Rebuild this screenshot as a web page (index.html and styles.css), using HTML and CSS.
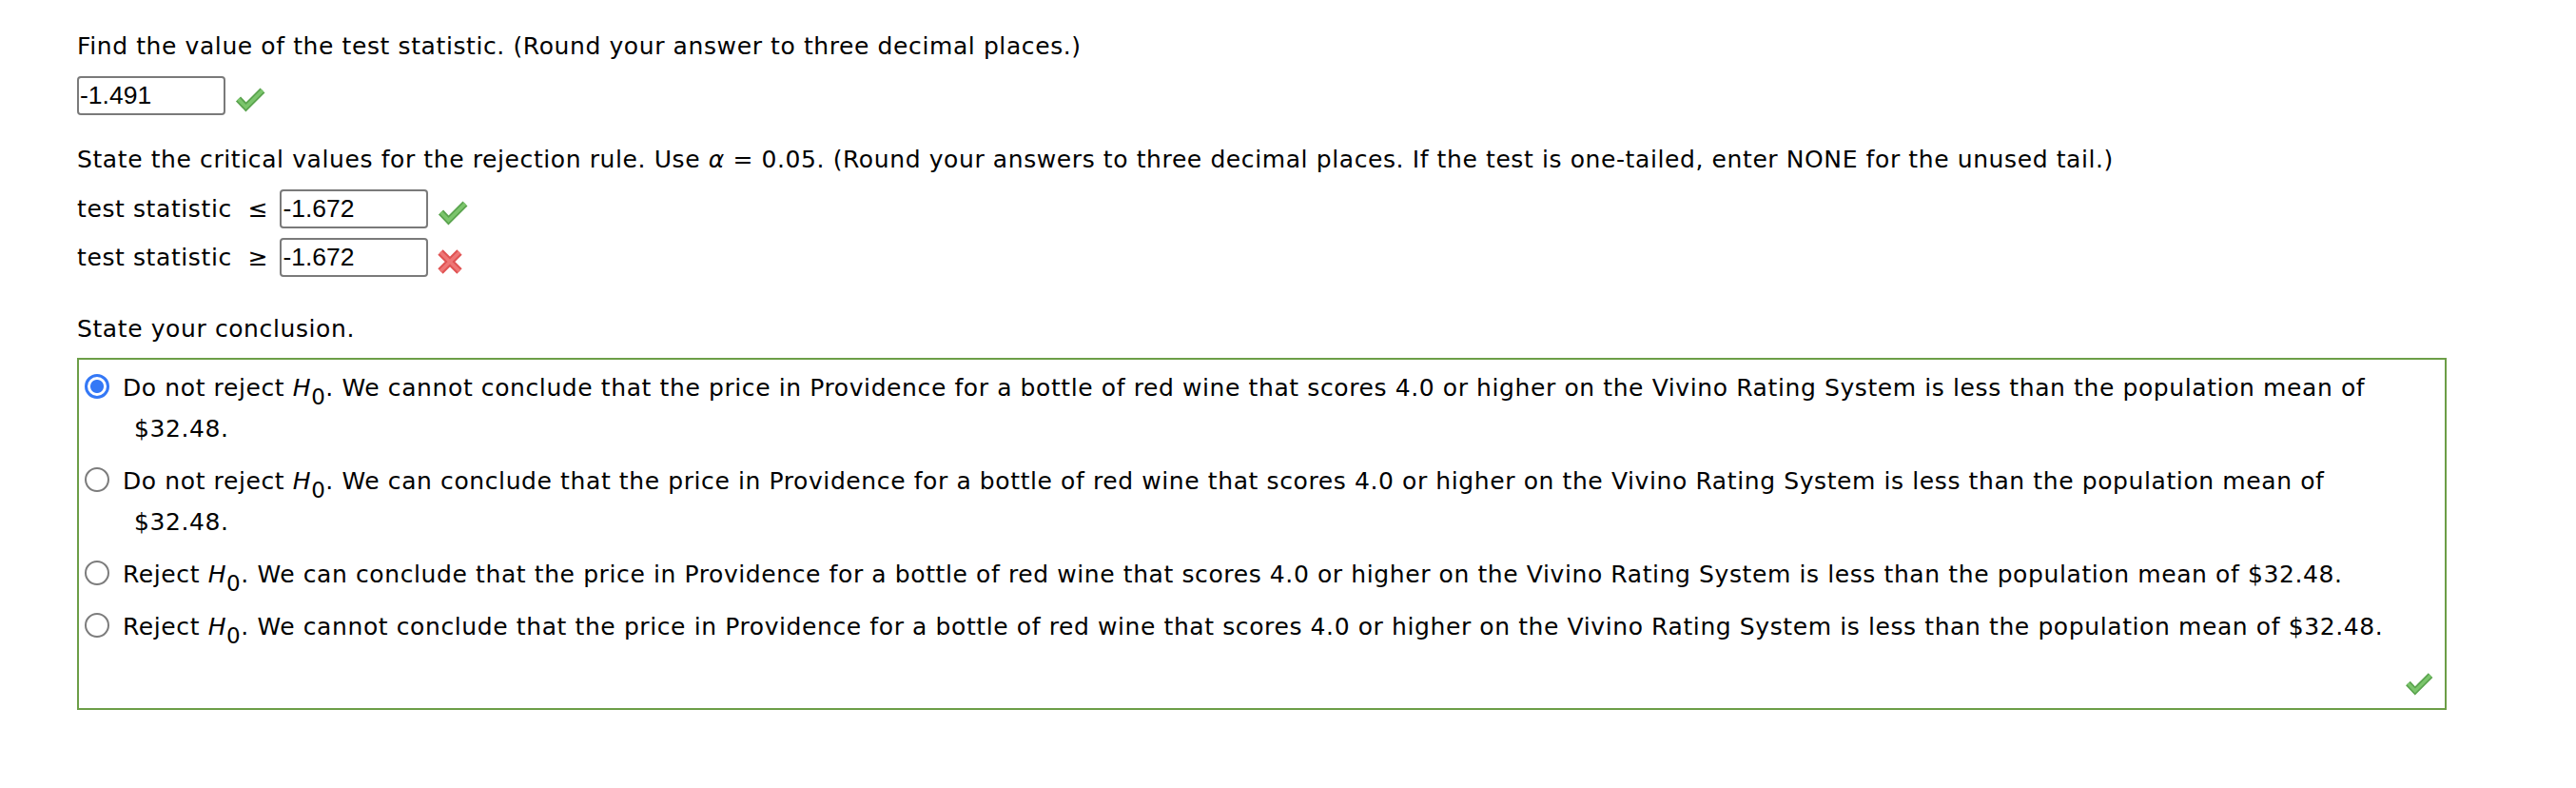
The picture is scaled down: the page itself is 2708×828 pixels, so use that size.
FILE: index.html
```html
<!DOCTYPE html>
<html lang="en">
<head>
    <meta charset="UTF-8">
    <meta name="viewport" content="width=device-width, initial-scale=1.0">
    <title>Hypothesis test</title>
    <link rel="stylesheet" href="styles.css">
</head>
<body>

    <div class="question">

        <div class="part">
            <p class="prompt">Find the value of the test statistic. (Round your answer to three decimal places.)</p>
            <div class="answer-row">
                <input class="answer" type="text" value="-1.491" readonly>
                <svg class="mark" width="32" height="28" viewBox="0 0 32 28">
                    <path class="ok-edge" d="M3.5 14 L11.5 22.5 L29 5"/>
                    <path class="ok-fill" d="M3.5 14 L11.5 22.5 L29 5"/>
                </svg>
            </div>
        </div>

        <div class="part rule">
            <p class="prompt">State the critical values for the rejection rule. Use <i class="math">&alpha;</i> = 0.05. (Round your answers to three decimal places. If the test is one-tailed, enter NONE for the unused tail.)</p>
            <div class="answer-row">
                <span class="lead">test statistic&nbsp; &le;</span>
                <input class="answer" type="text" value="-1.672" readonly>
                <svg class="mark" width="32" height="28" viewBox="0 0 32 28">
                    <path class="ok-edge" d="M3.5 14 L11.5 22.5 L29 5"/>
                    <path class="ok-fill" d="M3.5 14 L11.5 22.5 L29 5"/>
                </svg>
            </div>
            <div class="answer-row">
                <span class="lead">test statistic&nbsp; &ge;</span>
                <input class="answer" type="text" value="-1.672" readonly>
                <svg class="mark wrong" width="30" height="30" viewBox="0 0 30 30">
                    <path class="bad-edge" d="M5 5 L25 25 M25 5 L5 25"/>
                    <path class="bad-fill" d="M5 5 L25 25 M25 5 L5 25"/>
                </svg>
            </div>
        </div>

        <div class="part">
            <p class="prompt">State your conclusion.</p>
            <div class="choices">
                <label class="choice">
                    <input type="radio" name="conclusion" checked>
                    <span class="choice-text">Do not reject <i>H</i><sub>0</sub>. We cannot conclude that the price in Providence for a bottle of red wine that scores 4.0 or higher on the Vivino Rating System is less than the population mean of <span class="amount">$32.48</span>.</span>
                </label>
                <label class="choice">
                    <input type="radio" name="conclusion">
                    <span class="choice-text">Do not reject <i>H</i><sub>0</sub>. We can conclude that the price in Providence for a bottle of red wine that scores 4.0 or higher on the Vivino Rating System is less than the population mean of <span class="amount">$32.48</span>.</span>
                </label>
                <label class="choice">
                    <input type="radio" name="conclusion">
                    <span class="choice-text">Reject <i>H</i><sub>0</sub>. We can conclude that the price in Providence for a bottle of red wine that scores 4.0 or higher on the Vivino Rating System is less than the population mean of <span class="amount">$32.48</span>.</span>
                </label>
                <label class="choice">
                    <input type="radio" name="conclusion">
                    <span class="choice-text">Reject <i>H</i><sub>0</sub>. We cannot conclude that the price in Providence for a bottle of red wine that scores 4.0 or higher on the Vivino Rating System is less than the population mean of <span class="amount">$32.48</span>.</span>
                </label>
                <div class="choices-foot">
                    <svg class="mark" width="32" height="26" viewBox="0 0 32 28">
                        <path class="ok-edge" d="M3.5 14 L11.5 22.5 L29 5"/>
                        <path class="ok-fill" d="M3.5 14 L11.5 22.5 L29 5"/>
                    </svg>
                </div>
            </div>
        </div>

    </div>

</body>
</html>
```

FILE: styles.css
```css
body {
    margin: 0;
    padding: 0;
    font-family: "DejaVu Sans", Verdana, sans-serif;
    font-size: 25px;
    letter-spacing: 0.6px;
    line-height: 43px;
    color: #000;
    background-color: #fff;
}

.question {
    width: 2491px;
    padding: 27px 0 0 81px;
}

.part {
    margin-bottom: 25px;
}

.part.rule {
    margin-bottom: 33px;
}

.prompt {
    margin: 0;
}

.math {
    font-style: italic;
}

.answer-row {
    display: flex;
    align-items: center;
    height: 41px;
    margin-top: 10px;
}

.lead {
    margin-right: 12px;
    white-space: nowrap;
}

.answer {
    width: 156px;
    height: 41px;
    box-sizing: border-box;
    padding: 0 0 0 1px;
    font-family: "Liberation Sans", Arial, sans-serif;
    font-size: 26.5px;
    letter-spacing: normal;
    color: #000;
    border: 2px solid #7a7a7a;
    border-radius: 4px;
    outline: none;
}

.mark {
    margin-left: 10px;
    margin-top: 7px;
}

.mark.wrong {
    margin-left: 8px;
    margin-top: 8px;
}

.ok-edge,
.ok-fill,
.bad-edge,
.bad-fill {
    fill: none;
    stroke-linejoin: miter;
}

.ok-edge {
    stroke: #5aa34e;
    stroke-width: 7;
}

.ok-fill {
    stroke: #7bc56c;
    stroke-width: 3.5;
}

.bad-edge {
    stroke: #e05252;
    stroke-width: 7.5;
}

.bad-fill {
    stroke: #ee7676;
    stroke-width: 3.5;
}

.choices {
    margin-top: 9px;
    padding: 8px 11px 13px 6px;
    border: 2px solid #6c9e47;
}

.choice {
    display: flex;
    align-items: flex-start;
    margin-bottom: 12px;
    padding-right: 30px;
}

.choice input {
    appearance: none;
    flex: none;
    width: 26px;
    height: 26px;
    margin: 7px 0 0 0;
    box-sizing: border-box;
    border: 2px solid #7c7c7c;
    border-radius: 50%;
    background-color: #fff;
}

.choice input:checked {
    border: 3px solid #3478f6;
    background: radial-gradient(circle, #3478f6 0 6.5px, #fff 7.5px);
}

.choice-text {
    margin-left: 14px;
    padding-left: 12px;
    text-indent: -12px;
}

.choice-text sub {
    font-size: 0.92em;
    vertical-align: -0.4em;
    line-height: 0;
}

.choices-foot {
    display: flex;
    justify-content: flex-end;
    margin-top: 25px;
}

.choices-foot .mark {
    margin: 0;
}
```
